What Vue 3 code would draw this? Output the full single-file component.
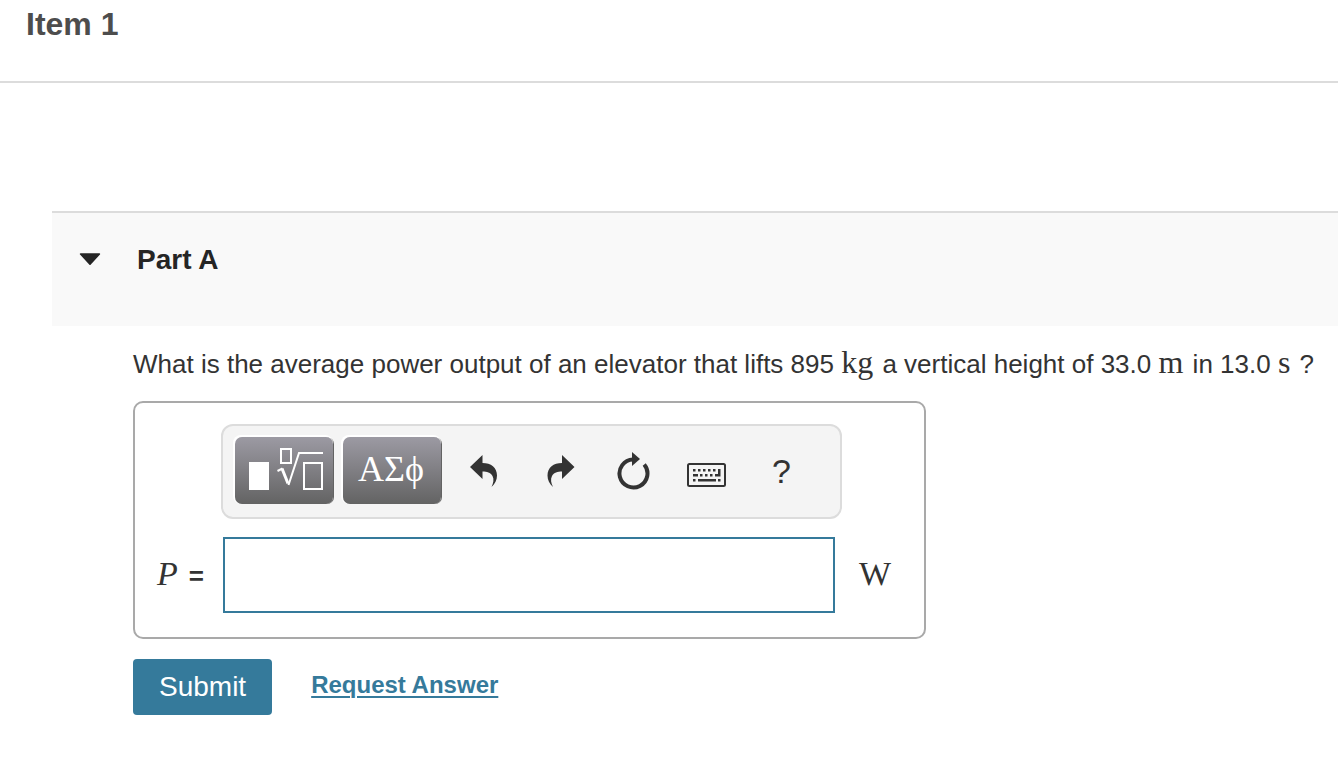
<script setup>
import { ref } from 'vue'

const open = ref(true)
const answer = ref('')
const keys = [
  [6, 6], [11, 6], [16, 6], [21, 6], [26, 6],
  [13, 11], [18, 11], [23, 11],
  [6, 16], [31, 16]
]
</script>

<template>
  <div class="page">
    <header class="item-header">
      <h1>Item 1</h1>
    </header>

    <main class="content">
      <section class="part-header">
        <button class="toggle" type="button" aria-label="Toggle Part A" :aria-expanded="open" @click="open = !open">
          <svg width="22" height="15" viewBox="0 0 22 15">
            <path d="M1.6 1H20.4L11 11.2Z" fill="#252525" stroke="#252525" stroke-width="1.6" stroke-linejoin="round" />
          </svg>
        </button>
        <h2>Part A</h2>
      </section>

      <form v-show="open" class="part-body" @submit.prevent>
        <p class="question">What is the average power output of an elevator that lifts 895 <span class="math">kg</span> a vertical height of 33.0 <span class="math">m</span> in 13.0 <span class="math">s</span> ?</p>

        <div class="answer-box">
          <div class="toolbar" role="toolbar" aria-label="Equation tools">
            <button class="palette" type="button" aria-label="Templates">
              <svg width="98" height="67" viewBox="0 0 98 67" fill="none" stroke="#fff">
                <rect x="14" y="25" width="20" height="28" fill="#fff" stroke="none" />
                <rect x="46" y="12" width="10" height="14" stroke-width="2" />
                <path d="M42.500 34L47.500 31.500" stroke-width="2" />
                <path d="M47 31.500L53 46.500" stroke-width="3" />
                <path d="M53.500 48L64 16H88" stroke-width="2" />
                <rect x="69" y="26" width="18" height="26" stroke-width="2" />
              </svg>
            </button>
            <button class="palette greek" type="button" aria-label="Symbols">ΑΣϕ</button>
            <button class="tool undo" type="button" aria-label="Undo">
              <svg width="28" height="32" viewBox="0 0 28 32">
                <path d="M0 12L12.500 0V8C21 8 27 12.500 27 20.500C27 25 25 29 21.500 32C23.500 28 24.200 24 22.500 21C20.500 17.500 17 16.500 12.500 16.500V24Z" fill="#333" />
              </svg>
            </button>
            <button class="tool redo" type="button" aria-label="Redo">
              <svg width="28" height="32" viewBox="0 0 28 32">
                <path d="M27.500 12L15 0V8C6.500 8 0.500 12.500 0.500 20.500C0.500 25 2.500 29 6 32C4 28 3.300 24 5 21C7 17.500 10.500 16.500 15 16.500V24Z" fill="#333" />
              </svg>
            </button>
            <button class="tool reset" type="button" aria-label="Reset">
              <svg width="34" height="38" viewBox="0 0 34 38">
                <path d="M17 7.500A14 14 0 1 0 28.200 12.500" fill="none" stroke="#333" stroke-width="4" />
                <path d="M16 0L24 7L16 14Z" fill="#333" />
              </svg>
            </button>
            <button class="tool keyboard" type="button" aria-label="Keyboard shortcuts">
              <svg width="40" height="24" viewBox="0 0 40 24" fill="#333">
                <rect x="1" y="1" width="37" height="22" rx="1.500" fill="none" stroke="#333" stroke-width="2" />
                <rect v-for="([x, y], i) in keys" :key="i" :x="x" :y="y" width="2.500" height="2.500" />
                <path d="M31 6H33.500V13.500H28V11H31ZM6 11H11V13.500H6ZM11 16H29V18.500H11Z" />
              </svg>
            </button>
            <button class="tool help" type="button" aria-label="Help">?</button>
          </div>

          <div class="entry">
            <label for="answer"><i>P</i><span>=</span></label>
            <input id="answer" v-model="answer" type="text" autocomplete="off" />
            <span class="unit">W</span>
          </div>
        </div>

        <div class="actions">
          <button class="submit" type="submit">Submit</button>
          <a href="#answer">Request Answer</a>
        </div>
      </form>
    </main>
  </div>
</template>

<style>
body {
  background: #fff;
}
</style>

<style scoped>
* {
  box-sizing: border-box;
}

.page {
  font-family: "Liberation Sans", Arial, sans-serif;
  color: #333;
  overflow-x: hidden;
}

button {
  font-family: inherit;
  margin: 0;
  padding: 0;
  border: 0;
  background: none;
  color: inherit;
  cursor: pointer;
}

svg {
  display: block;
}

h1,
h2,
p {
  margin: 0;
}

.item-header {
  padding: 4px 26px 37px;
  border-bottom: 2px solid #dcdcdc;
}

h1 {
  font-size: 32px;
  line-height: 40px;
  color: #4d4d4d;
}

.content {
  padding: 128px 0 24px 52px;
}

.part-header {
  display: flex;
  align-items: center;
  gap: 36px;
  padding: 28px 27px 47px;
  border-top: 2px solid #dcdcdc;
  background: #f9f9f9;
}

h2 {
  font-size: 28px;
  line-height: 38px;
  color: #252525;
}

.part-body {
  padding-left: 81px;
}

.question {
  padding: 18px 0 17px;
  font-size: 26px;
  line-height: 40px;
}

.math {
  margin-right: 2px;
  font-family: "Liberation Serif", "Times New Roman", serif;
  font-size: 32px;
  line-height: 32px;
}

.answer-box {
  width: fit-content;
  max-width: 100%;
  padding: 21px 33px 24px 22px;
  border: 2px solid #a9a9a9;
  border-radius: 10px;
}

.toolbar {
  display: flex;
  align-items: center;
  width: 621px;
  margin-left: 64px;
  padding: 11px 12px 13px;
  border: 2px solid #dcdcdc;
  border-radius: 12px;
  background: #f4f4f4;
}

.palette {
  width: 98px;
  height: 67px;
  border-radius: 7px;
  background: linear-gradient(#9c9aa3, #636363);
  box-shadow: -1px -1px 0 1px #fff, 1px 0 0 #636363;
  color: #fff;
}

.greek {
  margin-left: 10px;
  padding: 0 2px 3px 0;
  font-family: "Liberation Serif", "Times New Roman", serif;
  font-size: 36px;
}

.undo {
  margin-left: 29px;
}

.redo {
  margin-left: 49px;
}

.reset {
  margin-left: 41px;
}

.keyboard {
  margin: 8px 0 0 37px;
}

.help {
  margin-left: 45px;
  font-size: 34px;
  line-height: 40px;
}

.entry {
  display: flex;
  align-items: center;
  margin-top: 18px;
}

label {
  display: flex;
  align-items: baseline;
  width: 66px;
  gap: 11px;
  padding-bottom: 3px;
  font-size: 26px;
  font-weight: 700;
}

label i,
.unit {
  font-family: "Liberation Serif", "Times New Roman", serif;
  font-size: 34px;
  font-weight: 400;
}

input {
  width: 612px;
  height: 76px;
  padding: 0 12px;
  border: 2px solid #357a9b;
  background: #fff;
  font: 28px "Liberation Sans", Arial, sans-serif;
  color: #333;
  outline: none;
}

.unit {
  margin-left: 24px;
  padding-bottom: 3px;
}

.actions {
  display: flex;
  align-items: center;
  gap: 39px;
  margin-top: 20px;
}

.submit {
  height: 56px;
  padding: 0 26px;
  border-radius: 4px;
  background: #357a9b;
  color: #fff;
  font-size: 28px;
}

a {
  padding-bottom: 4px;
  color: #357a9b;
  font-size: 24px;
  font-weight: 700;
  text-underline-offset: 3px;
  text-decoration-thickness: 2px;
}
</style>
